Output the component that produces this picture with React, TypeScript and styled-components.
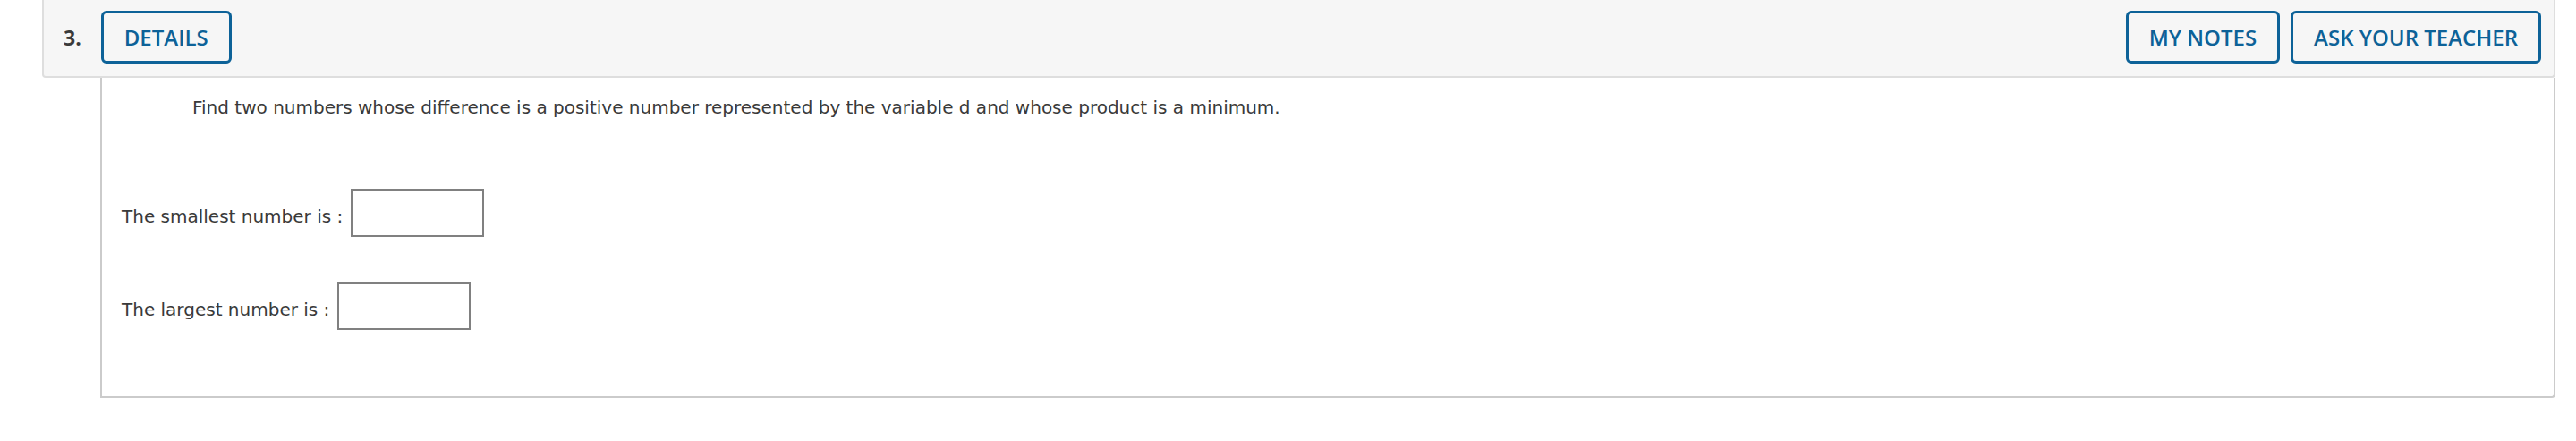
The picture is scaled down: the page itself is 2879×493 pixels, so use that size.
import { useState } from 'react'
import styled, { createGlobalStyle } from 'styled-components'

const GlobalStyle = createGlobalStyle`
  html, body {
    margin: 0;
    padding: 0;
    background: #fff;
  }
  * {
    box-sizing: border-box;
  }
`

const Page = styled.div`
  padding: 0 23px 0 47px;
  font-family: 'DejaVu Sans', Verdana, sans-serif;
  color: #3a3a3a;
`

const QuestionHeader = styled.div`
  display: flex;
  align-items: center;
  height: 87px;
  padding: 0 14px 2px 22px;
  background: #f6f6f6;
  border: 2px solid #dedede;
  border-top: none;
  border-radius: 0 0 4px 4px;
`

const Number = styled.span`
  font-family: 'Open Sans', 'Liberation Sans', sans-serif;
  font-weight: 700;
  font-size: 23px;
  color: #3a3a3a;
  margin-right: 22px;
`

const Spacer = styled.div`
  flex: 1;
`

const HeaderButton = styled.button<{ $last?: boolean }>`
  height: 59px;
  padding: 0 23px;
  margin-right: ${(p) => (p.$last ? '0' : '12px')};
  background: transparent;
  border: 3px solid #0d6298;
  border-radius: 6px;
  color: #0d6298;
  font-family: 'Open Sans', 'Liberation Sans', sans-serif;
  font-weight: 600;
  font-size: 24px;
  text-transform: uppercase;
  cursor: pointer;
`

const QuestionBody = styled.div`
  margin-left: 65px;
  padding: 21px 22px 74px;
  border: 2px solid #cbcbcb;
  border-top: none;
  border-radius: 0 0 4px 0;
  font-size: 20px;
  line-height: 24px;
`

const Prompt = styled.p`
  margin: 0 0 79px 79px;
`

const AnswerRow = styled.div`
  display: flex;
  align-items: flex-end;
  gap: 9px;
  & + & {
    margin-top: 50px;
  }
`

const Label = styled.label`
  margin-bottom: 11px;
`

const AnswerInput = styled.input`
  width: 149px;
  height: 54px;
  border: 2px solid #808080;
  background: #fff;
  font-family: inherit;
  font-size: 20px;
  padding: 0 8px;
  outline: none;
`

function App() {
  const [small, setSmall] = useState('')
  const [large, setLarge] = useState('')

  return (
    <Page>
      <GlobalStyle />
      <QuestionHeader>
        <Number>3.</Number>
        <HeaderButton>Details</HeaderButton>
        <Spacer />
        <HeaderButton>My Notes</HeaderButton>
        <HeaderButton $last>Ask Your Teacher</HeaderButton>
      </QuestionHeader>
      <QuestionBody>
        <Prompt>
          Find two numbers whose difference is a positive number represented by the variable d and whose product is a minimum.
        </Prompt>
        <AnswerRow>
          <Label htmlFor='smallest'>The smallest number is :</Label>
          <AnswerInput id='smallest' value={small} onChange={(e) => setSmall(e.target.value)} />
        </AnswerRow>
        <AnswerRow>
          <Label htmlFor='largest'>The largest number is :</Label>
          <AnswerInput id='largest' value={large} onChange={(e) => setLarge(e.target.value)} />
        </AnswerRow>
      </QuestionBody>
    </Page>
  )
}

export default App
